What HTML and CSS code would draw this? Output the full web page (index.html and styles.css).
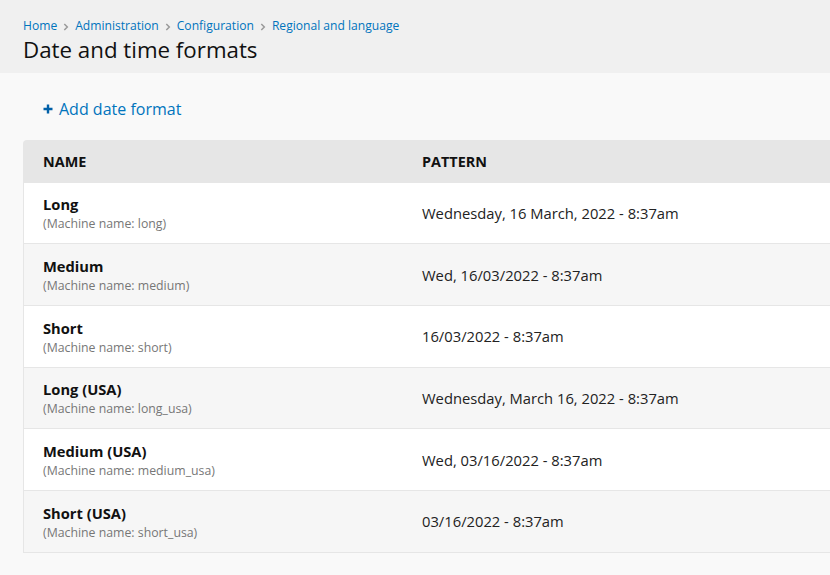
FILE: index.html
```html
<!DOCTYPE html>
<html lang="en">
<head>
<meta charset="utf-8">
<title>Date and time formats</title>
<link rel="stylesheet" href="styles.css">
</head>
<body>
<header class="page-header">
  <nav class="breadcrumb">
    <a href="#">Home</a>
    <svg class="sep" width="6" height="8" viewBox="0 0 6 8"><path d="M1.3 1 L4.3 4 L1.3 7" fill="none" stroke="#999" stroke-width="1.5"/></svg>
    <a href="#">Administration</a>
    <svg class="sep" width="6" height="8" viewBox="0 0 6 8"><path d="M1.3 1 L4.3 4 L1.3 7" fill="none" stroke="#999" stroke-width="1.5"/></svg>
    <a href="#">Configuration</a>
    <svg class="sep" width="6" height="8" viewBox="0 0 6 8"><path d="M1.3 1 L4.3 4 L1.3 7" fill="none" stroke="#999" stroke-width="1.5"/></svg>
    <a href="#">Regional and language</a>
  </nav>
  <h1 class="page-title">Date and time formats</h1>
</header>
<main class="content">
  <a class="action-link" href="#">
    <svg class="plus" width="10" height="10" viewBox="0 0 10 10"><path d="M5 0.5 V9.5 M0.5 5 H9.5" stroke="#0060a8" stroke-width="2.4"/></svg>
    Add date format
  </a>
  <table class="formats">
    <thead>
      <tr><th class="col-name">Name</th><th class="col-pattern">Pattern</th><th class="col-ops"></th></tr>
    </thead>
    <tbody>
      <tr><td><div class="fname">Long</div><div class="machine">(Machine name: long)</div></td><td>Wednesday, 16 March, 2022 - 8:37am</td><td></td></tr>
      <tr><td><div class="fname">Medium</div><div class="machine">(Machine name: medium)</div></td><td>Wed, 16/03/2022 - 8:37am</td><td></td></tr>
      <tr><td><div class="fname">Short</div><div class="machine">(Machine name: short)</div></td><td>16/03/2022 - 8:37am</td><td></td></tr>
      <tr><td><div class="fname">Long (USA)</div><div class="machine">(Machine name: long_usa)</div></td><td>Wednesday, March 16, 2022 - 8:37am</td><td></td></tr>
      <tr><td><div class="fname">Medium (USA)</div><div class="machine">(Machine name: medium_usa)</div></td><td>Wed, 03/16/2022 - 8:37am</td><td></td></tr>
      <tr><td><div class="fname">Short (USA)</div><div class="machine">(Machine name: short_usa)</div></td><td>03/16/2022 - 8:37am</td><td></td></tr>
    </tbody>
  </table>
</main>
</body>
</html>
```
FILE: styles.css
```css
html {
  overflow: hidden;
}
body {
  margin: 0;
  background: #f9f9f9;
  font-family: "Open Sans", "Noto Sans", sans-serif;
  color: #222;
  width: 1100px;
}
a {
  color: #0074bd;
  text-decoration: none;
}
.page-header {
  background: #f0f0f0;
  padding: 17px 23px 10px;
  height: 46px;
}
.breadcrumb {
  display: flex;
  align-items: center;
  gap: 6px;
  font-size: 12.1px;
  line-height: 18px;
}
.breadcrumb .sep {
  margin: 1px 0 0;
}
.page-title {
  margin: 1px 0 0;
  font-size: 22.3px;
  font-weight: 400;
  line-height: 28px;
  color: #111;
}
.content {
  padding: 24px 23px 20px;
}
.action-link {
  display: inline-flex;
  align-items: center;
  gap: 6px;
  margin-left: 20px;
  font-size: 16px;
  line-height: 22px;
}
.plus {
  margin-top: 1px;
}
.formats {
  margin-top: 20px;
  width: 100%;
  border-collapse: separate;
  border-spacing: 0;
  font-size: 14.75px;
}
.formats thead th {
  background: #e6e6e6;
  text-align: left;
  text-transform: uppercase;
  font-size: 14.4px;
  font-weight: 700;
  height: 43px;
  padding: 0 20px;
  color: #111;
}
.formats thead th.col-name {
  border-top-left-radius: 4px;
  width: 339px;
}
.formats thead th.col-pattern {
  width: 440px;
}
.formats tbody td {
  padding: 0 20px;
  height: 60.7px;
  border-bottom: 1px solid #e6e6e6;
  color: #222;
}
.formats tbody td:first-child {
  border-left: 1px solid #e6e6e6;
  padding-left: 19px;
  padding-top: 3px;
  height: 57.7px;
}
.formats tbody tr:nth-child(odd) td {
  background: #fff;
}
.formats tbody tr:nth-child(even) td {
  background: #f6f6f6;
}
.fname {
  font-weight: 700;
  font-size: 14.7px;
  line-height: 19px;
  color: #111;
}
.machine {
  font-size: 12.3px;
  line-height: 18px;
  color: #777;
  margin-top: 1px;
}
```
